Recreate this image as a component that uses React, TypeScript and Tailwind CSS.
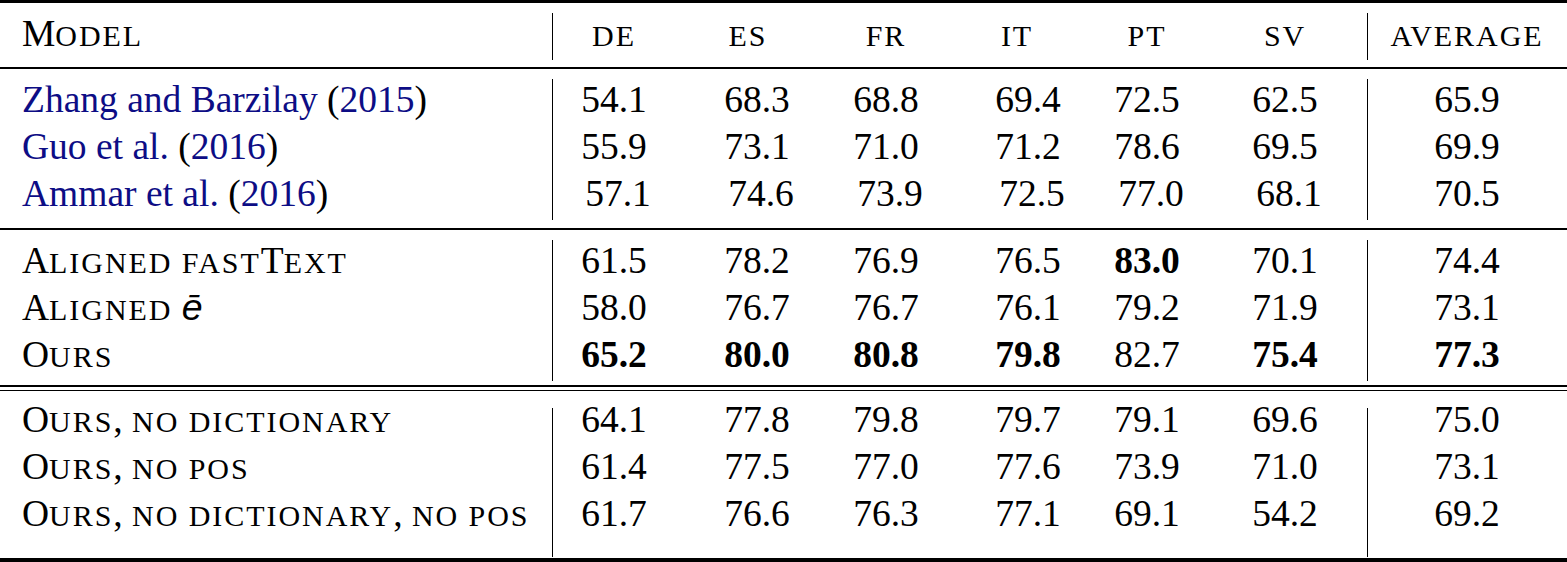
import React from "react";

type Row = {
  label: React.ReactNode;
  values: string[]; // 6 languages, "*" prefix = bold
  avg: string;
  nudge?: boolean; // numbers of this row sit a little to the right
};

const Cite = ({ name, year }: { name: string; year: string }) => (
  <>
    <span className="text-[#0d0d85]">{name}</span> (<span className="text-[#0d0d85]">{year}</span>)
  </>
);

// fake small caps: lowercase runs become smaller capitals
const SC = ({ text }: { text: string }) => {
  const parts = text.match(/[a-z]+|[^a-z]+/g) || [];
  return (
    <>
      {parts.map((p, i) =>
        /[a-z]/.test(p) ? (
          <span key={i} className="text-[0.8em] uppercase tracking-[0.065em]">
            {p}
          </span>
        ) : (
          <span key={i}>{p}</span>
        )
      )}
    </>
  );
};

const colStart = ["col-start-1", "col-start-2", "col-start-3", "col-start-4", "col-start-5", "col-start-6", "col-start-7", "col-start-8"];
const rowStart = ["row-start-1", "row-start-2", "row-start-3"];
// numbers in the ES and IT columns sit right of their header
const numShift = ["", "ml-[18px]", "", "ml-[22px]", "", "", ""];

const blocks: { rows: Row[]; pad: string; line: string }[] = [
  {
    pad: "pt-[10.5px] pb-[8px]",
    line: "",
    rows: [
      { label: <Cite name="Zhang and Barzilay" year="2015" />, values: ["54.1", "68.3", "68.8", "69.4", "72.5", "62.5"], avg: "65.9" },
      { label: <Cite name="Guo et al." year="2016" />, values: ["55.9", "73.1", "71.0", "71.2", "78.6", "69.5"], avg: "69.9" },
      { label: <Cite name="Ammar et al." year="2016" />, values: ["57.1", "74.6", "73.9", "72.5", "77.0", "68.1"], avg: "70.5", nudge: true },
    ],
  },
  {
    pad: "pt-[10.5px] pb-[4px]",
    line: "",
    rows: [
      { label: <SC text="Aligned fastText" />, values: ["61.5", "78.2", "76.9", "76.5", "*83.0", "70.1"], avg: "74.4" },
      {
        label: (
          <>
            <SC text="Aligned " />
            <span className="italic font-['Liberation_Sans',sans-serif]">ē</span>
          </>
        ),
        values: ["58.0", "76.7", "76.7", "76.1", "79.2", "71.9"],
        avg: "73.1",
      },
      { label: <SC text="Ours" />, values: ["*65.2", "*80.0", "*80.8", "*79.8", "82.7", "*75.4"], avg: "*77.3" },
    ],
  },
  {
    pad: "pt-[8px] pb-[18px]",
    line: "mt-[9px] -mb-[17px]",
    rows: [
      { label: <SC text="Ours, no dictionary" />, values: ["64.1", "77.8", "79.8", "79.7", "79.1", "69.6"], avg: "75.0" },
      { label: <SC text="Ours, no pos" />, values: ["61.4", "77.5", "77.0", "77.6", "73.9", "71.0"], avg: "73.1" },
      { label: <SC text="Ours, no dictionary, no pos" />, values: ["61.7", "76.6", "76.3", "77.1", "69.1", "54.2"], avg: "69.2" },
    ],
  },
];

const langs = ["de", "es", "fr", "it", "pt", "sv"];

const gridCols = "grid grid-cols-[552px_124px_144px_132px_130px_130px_155px_200px] auto-rows-[47px]";
const cell = "leading-[41px] whitespace-nowrap";

const Num = ({ v }: { v: string }) =>
  v.startsWith("*") ? <span className="font-bold">{v.slice(1)}</span> : <>{v}</>;

// one row of the table, every cell placed on the grid explicitly
const Cells = ({ r, label, values }: { r: number; label: React.ReactNode; values: React.ReactNode[] }) => (
  <>
    <div className={`${cell} ${colStart[0]} ${rowStart[r]} pl-[22px]`}>{label}</div>
    {values.map((v, i) => (
      <div key={i} className={`${cell} ${colStart[i + 1]} ${rowStart[r]} text-center ${i === 5 ? "pr-[9px]" : ""}`}>
        {v}
      </div>
    ))}
  </>
);

const VLines = ({ span, extra }: { span: string; extra: string }) => (
  <>
    <div className={`col-start-2 row-start-1 ${span} border-l border-black ${extra}`} />
    <div className={`col-start-8 row-start-1 ${span} border-l border-black ${extra}`} />
  </>
);

const App: React.FC = () => {
  return (
    <div className="w-[1567px] h-[562px] bg-white text-black font-['Liberation_Serif','Times_New_Roman',serif] text-[37.5px] overflow-hidden">
      <div className="h-[3px] bg-black" />

      {/* header */}
      <div className={`${gridCols} pt-[10px] pb-[7px]`}>
        <VLines span="row-end-2" extra="" />
        <Cells
          r={0}
          label={<SC text="Model" />}
          values={[...langs, "average"].map((l) => <SC key={l} text={l} />)}
        />
      </div>

      {blocks.map((b, bi) => (
        <React.Fragment key={bi}>
          {bi === 2 ? (
            <div className="flex flex-col gap-[3px]">
              <div className="h-[1.5px] bg-black" />
              <div className="h-[1.5px] bg-black" />
            </div>
          ) : (
            <div className="h-[1.5px] bg-black" />
          )}
          <div className={`${gridCols} ${b.pad}`}>
            <VLines span="row-end-4" extra={b.line} />
            {b.rows.map((row, ri) => (
              <Cells
                key={ri}
                r={ri}
                label={row.label}
                values={[...row.values, row.avg].map((v, i) => (
                  <span key={i} className={row.nudge && i < 6 ? "ml-[8px]" : ""}>
                    <span className={numShift[i]}>
                      <Num v={v} />
                    </span>
                  </span>
                ))}
              />
            ))}
          </div>
        </React.Fragment>
      ))}

      <div className="h-[4px] bg-black" />
    </div>
  );
};

export default App;
